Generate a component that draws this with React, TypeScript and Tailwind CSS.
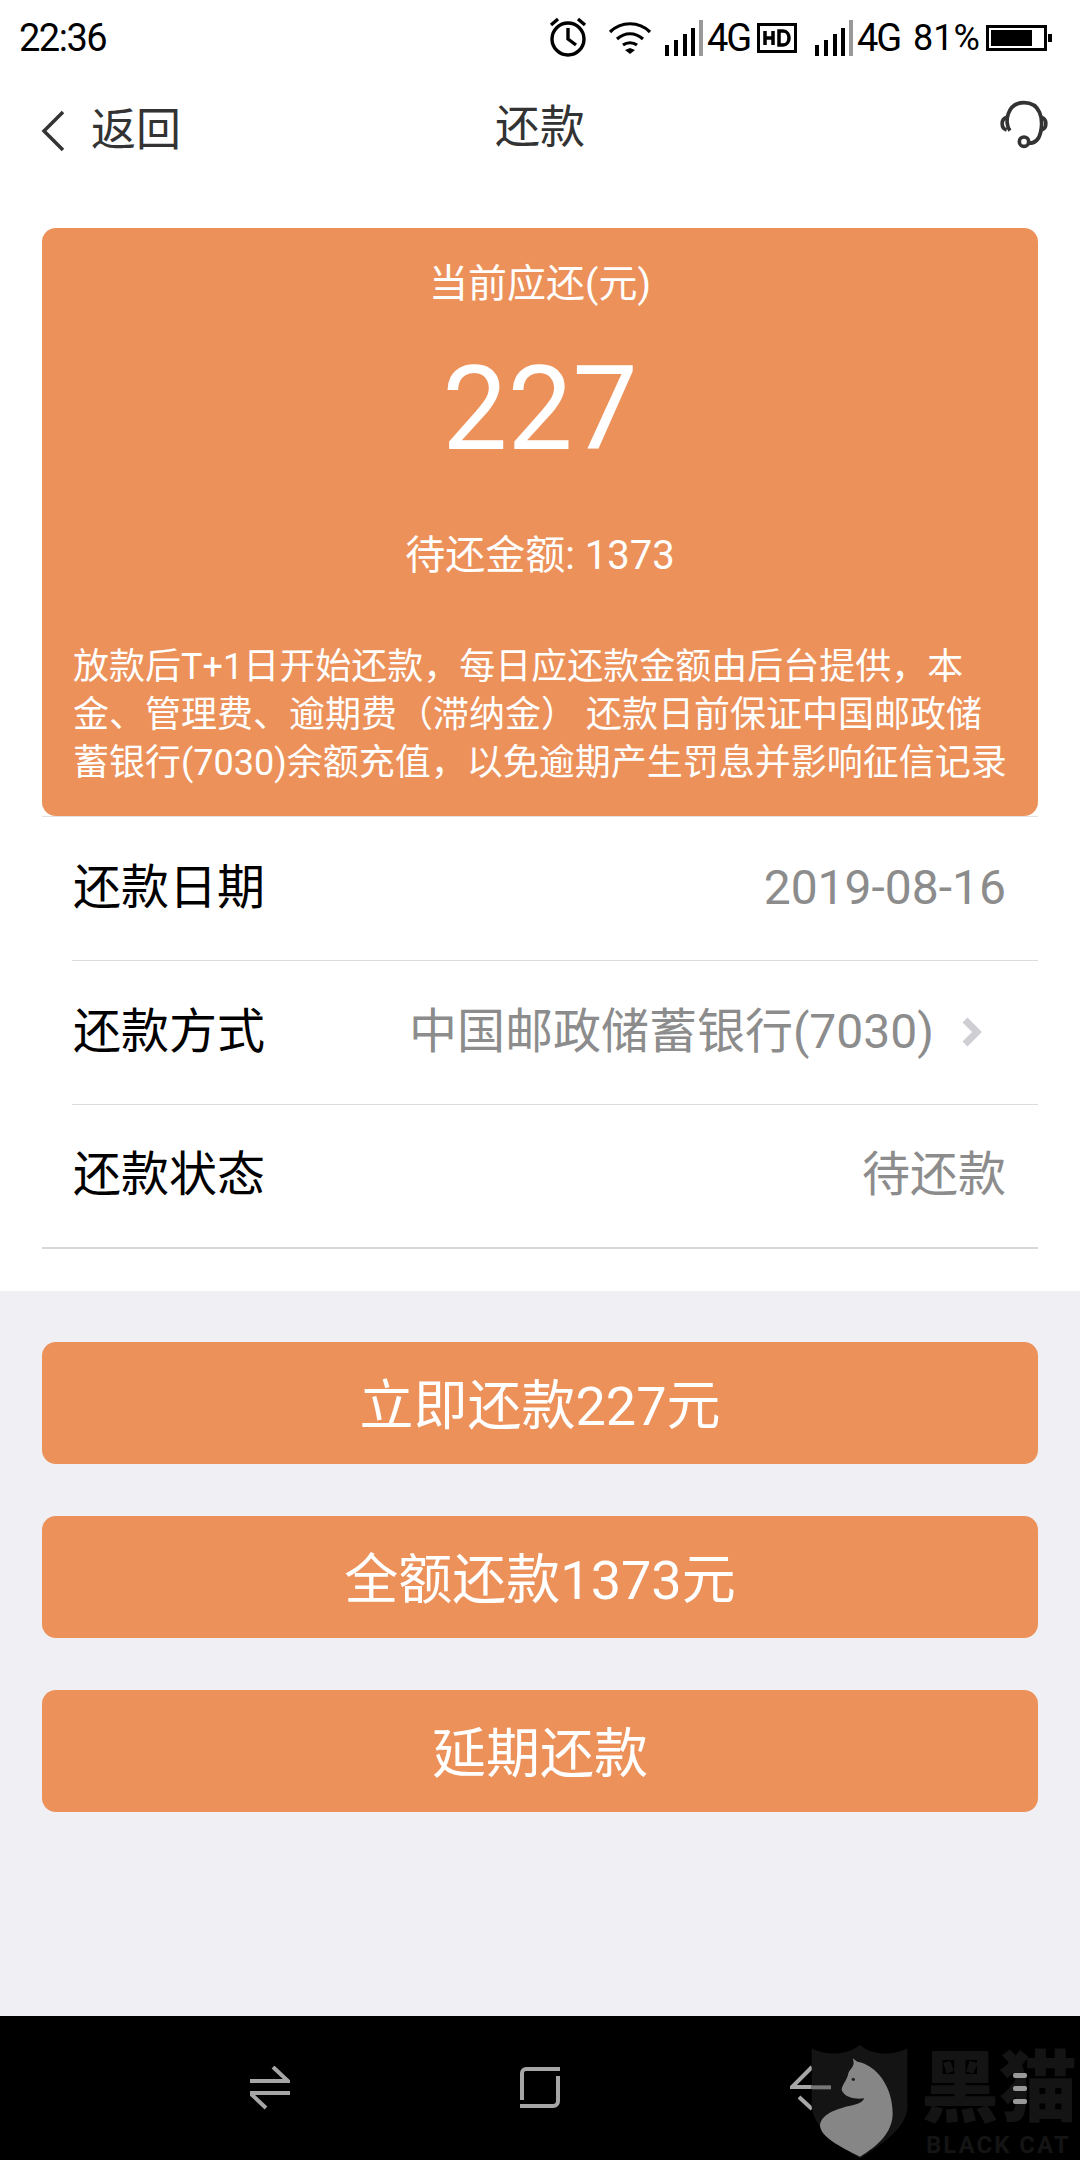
const font = "font-['Roboto','Noto_Sans_CJK_SC',sans-serif]"

function SignalBars() {
  return (
    <svg width="38" height="36" viewBox="0 0 38 36">
      <rect x="0" y="25" width="4" height="11" fill="#000" />
      <rect x="9" y="20" width="4" height="16" fill="#000" />
      <rect x="18" y="14" width="4" height="22" fill="#000" />
      <rect x="26" y="8" width="4" height="28" fill="#000" />
      <rect x="34" y="0" width="4" height="36" fill="#999" />
    </svg>
  )
}

function StatusIcons() {
  return (
    <div className="flex items-center">
      <svg width="38" height="42" viewBox="0 0 38 42" fill="none" stroke="#000" strokeWidth="3.4" className="mr-[21px] mb-[4px]">
        <circle cx="19" cy="24" r="16" />
        <path d="M19 13v11l8 6M2 10l7-6M36 10l-7-6" />
      </svg>
      <svg width="44" height="34" viewBox="0 0 44 34" fill="none" stroke="#000" strokeWidth="3.2" className="mr-[13px]">
        <path d="M2 11c11-11 29-11 40 0M9 18c8-7 18-7 26 0M15 24c4-3 10-3 14 0" />
        <path d="M22 33l-5-4 5-2 5 2z" fill="#000" stroke="none" />
      </svg>
      <SignalBars />
      <span className="mr-[7px] ml-[4px] w-[43px] text-[38px] leading-none tracking-[-2px] text-black">4G</span>
      <svg width="40" height="30" viewBox="0 0 40 30" className="mr-[18px]">
        <rect x="1.5" y="1.5" width="37" height="27" fill="none" stroke="#000" strokeWidth="3" />
        <path d="M8 8v14M16 8v14M8 15h8M22 8v14h4c8 0 8-14 0-14z" fill="none" stroke="#000" strokeWidth="3.5" />
      </svg>
      <SignalBars />
      <span className="mr-[13px] ml-[4px] w-[43px] text-[38px] leading-none tracking-[-2px] text-black">4G</span>
      <span className="mr-[9px] w-[64px] text-[36px] leading-none whitespace-nowrap text-black">81%</span>
      <svg width="66" height="26" viewBox="0 0 66 26">
        <rect x="1.5" y="1.5" width="58" height="23" fill="none" stroke="#000" strokeWidth="3" />
        <rect x="5" y="5" width="41" height="16" fill="#000" />
        <rect x="62" y="9" width="4" height="8" fill="#000" />
      </svg>
    </div>
  )
}

function Row({ label, value, arrow, line }: { label: string; value: string; arrow?: boolean; line?: boolean }) {
  return (
    <div className={`ml-[30px] flex items-center justify-between pr-[32px] pb-[2px] pl-[1px] ${line ? 'h-[144px] border-b border-[#dcdcdc]' : 'h-[142px]'}`}>
      <span className="text-[48px] leading-none text-black">{label}</span>
      <span className="flex items-center text-[48px] leading-none text-[#8c8c8c]">
        {value}
        {arrow && (
          <svg width="20" height="30" viewBox="0 0 20 30" fill="none" stroke="#cfcfd3" strokeWidth="7" className="mr-[24px] ml-[28px]">
            <path d="M3 3l12 12L3 27" />
          </svg>
        )}
      </span>
    </div>
  )
}

function PayButton({ children }: { children: string }) {
  return (
    <div className="flex h-[122px] items-center justify-center rounded-[14px] bg-[#ec915a] pt-[8px] text-[54px] leading-none text-white">
      {children}
    </div>
  )
}

export default function App() {
  return (
    <div className={`flex h-[2160px] w-[1080px] flex-col bg-[#efeff4] ${font}`}>
      <div className="bg-white">
        <div className="flex h-[70px] items-center justify-between pt-[6px] pr-[28px] pl-[19px]">
          <span className="text-[38px] leading-none tracking-[-1.5px] text-black">22:36</span>
          <StatusIcons />
        </div>
        <div className="relative flex h-[112px] items-start justify-between pr-[20px] pl-[40px]">
          <div className="mt-[38px] flex items-center">
            <svg width="26" height="42" viewBox="0 0 26 42" fill="none" stroke="#333" strokeWidth="3.5">
              <path d="M23 2L4 21l19 19" />
            </svg>
            <span className="ml-[25px] text-[45px] leading-none text-[#333]">返回</span>
          </div>
          <span className="absolute top-[23px] left-0 w-full text-center text-[45px] leading-[70px] text-[#333]">还款</span>
          <svg width="80" height="70" viewBox="0 0 240 210" fill="none" stroke="#333" strokeWidth="11" className="mt-[20px]">
            <path d="M90 122C72 100 80 38 132 38c50 0 58 50 50 88-5 24-20 34-36 34" />
            <circle cx="132" cy="155" r="14" />
            <path d="M80 82c-18 6-18 32 0 38M184 82c18 6 18 32 0 38" />
          </svg>
        </div>

        <div className="mx-[42px] mt-[46px] h-[588px] rounded-[14px] bg-[#ec915a] text-white">
          <div className="pt-[31px] text-center text-[39px] leading-[50px]">当前应还(元)</div>
          <div className="mt-[35px] text-center text-[116px] leading-[130px]">227</div>
          <div className="mt-[57px] text-center text-[40px] leading-[50px]">待还金额: 1373</div>
          <p className="mt-[62px] pr-[26px] pl-[31px] text-[36px] leading-[48px]">
            放款后T+1日开始还款，每日应还款金额由后台提供，本金、管理费、逾期费（滞纳金） 还款日前保证中国邮政储蓄银行(7030)余额充值，以免逾期产生罚息并影响征信记录
          </p>
        </div>

        <div className="mx-[42px] border-t border-[#e2e2e2]">
          <Row label="还款日期" value="2019-08-16" line />
          <Row label="还款方式" value="中国邮政储蓄银行(7030)" arrow line />
          <Row label="还款状态" value="待还款" />
          <div className="h-[2px] bg-[#d8d8d8]" />
        </div>
        <div className="h-[42px]" />
      </div>

      <div className="flex flex-1 flex-col gap-[52px] px-[42px] pt-[51px]">
        <PayButton>立即还款227元</PayButton>
        <PayButton>全额还款1373元</PayButton>
        <PayButton>延期还款</PayButton>
      </div>

      <div className="relative flex h-[144px] items-center gap-[230px] bg-black pl-[250px]">
        <svg width="40" height="44" viewBox="0 0 40 44" fill="none" stroke="#a6a6a6" strokeWidth="4">
          <path d="M23 1l15 14H0M40 27H0l16 15" />
        </svg>
        <svg width="40" height="42" viewBox="0 0 40 42" fill="none" stroke="#a6a6a6" strokeWidth="4">
          <path d="M2 33V6c0-2 2-4 4-4h34M38 9v25c0 3-2 5-5 5H0" />
        </svg>
        <svg width="40" height="46" viewBox="0 0 40 46" fill="none" stroke="#a6a6a6" strokeWidth="4">
          <path d="M22 2L2 22h38M9 32l13 12" />
        </svg>
        <div className="relative z-10 -ml-[47px] flex flex-col gap-[8px]">
          <div className="h-[5px] w-[14px] rounded-[2px] bg-[#999]" />
          <div className="h-[5px] w-[14px] rounded-[2px] bg-[#999]" />
          <div className="h-[5px] w-[14px] rounded-[2px] bg-[#999]" />
        </div>

        {/* watermark */}
        <svg width="150" height="130" viewBox="0 0 450 390" className="absolute top-[14px] left-[770px]">
          <path d="M125 55c35 20 100 25 145-10 40 35 105 30 142 10v175c0 60-72 110-142 155-70-45-140-95-145-155z" fill="#141414" />
          <path d="M125 172h58" stroke="#777" strokeWidth="12" />
          <path d="M248 85l14 10c58 10 106 75 106 155 0 60-48 100-98 130-60-30-120-60-120-95 5-35 55-50 100-60 15-3 30-10 32-20-22 3-57 0-67-25 0-15 17-30 20-50 5-15 23-20 13-45z" fill="#868686" />
          <circle cx="250" cy="148" r="5" fill="#222" />
        </svg>
        <div className="absolute top-[35px] left-[921px] text-[78px] leading-[78px] font-black whitespace-nowrap text-[#141414]">黑猫</div>
        <div className="absolute top-[117px] left-[926px] text-[24px] leading-[24px] font-bold tracking-[2px] whitespace-nowrap text-[#141414]">BLACK CAT</div>
      </div>
    </div>
  )
}
